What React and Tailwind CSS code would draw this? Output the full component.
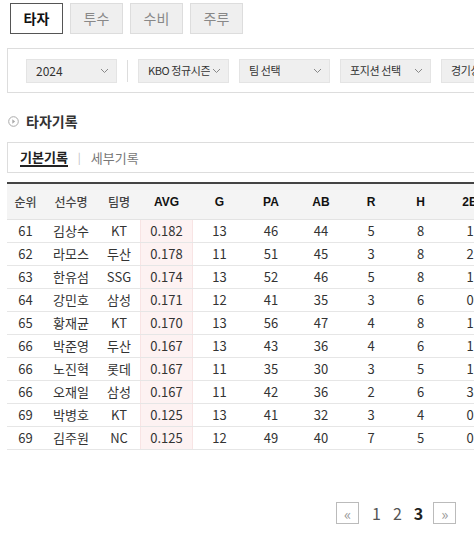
import React from 'react';

const TABS = ['타자', '투수', '수비', '주루'];

const FILTERS = ['2024', 'KBO 정규시즌', '팀 선택', '포지션 선택', '경기상황'];

const COLUMNS = [
  { key: 'rank', label: '순위', w: 'w-[37px]' },
  { key: 'name', label: '선수명', w: 'w-[54px]' },
  { key: 'team', label: '팀명', w: 'w-[42px]' },
  { key: 'avg', label: 'AVG', w: 'w-[53px]' },
  { key: 'g', label: 'G', w: 'w-[53px]' },
  { key: 'pa', label: 'PA', w: 'w-[50px]' },
  { key: 'ab', label: 'AB', w: 'w-[50px]' },
  { key: 'r', label: 'R', w: 'w-[50px]' },
  { key: 'h', label: 'H', w: 'w-[49px]' },
  { key: 'b2', label: '2B', w: 'w-[50px]' },
];

const ROWS = [
  ['61', '김상수', 'KT', '0.182', '13', '46', '44', '5', '8', '1'],
  ['62', '라모스', '두산', '0.178', '11', '51', '45', '3', '8', '2'],
  ['63', '한유섬', 'SSG', '0.174', '13', '52', '46', '5', '8', '1'],
  ['64', '강민호', '삼성', '0.171', '12', '41', '35', '3', '6', '0'],
  ['65', '황재균', 'KT', '0.170', '13', '56', '47', '4', '8', '1'],
  ['66', '박준영', '두산', '0.167', '13', '43', '36', '4', '6', '1'],
  ['66', '노진혁', '롯데', '0.167', '11', '35', '30', '3', '5', '1'],
  ['66', '오재일', '삼성', '0.167', '11', '42', '36', '2', '6', '3'],
  ['69', '박병호', 'KT', '0.125', '13', '41', '32', '3', '4', '0'],
  ['69', '김주원', 'NC', '0.125', '12', '49', '40', '7', '5', '0'],
];

function Chevron() {
  return (
    <svg width="9" height="6" viewBox="0 0 9 6" className="shrink-0">
      <path d="M1 1l3.5 3.5L8 1" fill="none" stroke="#888" strokeWidth="1" />
    </svg>
  );
}

export default function App() {
  return (
    <div className="w-[474px] h-[547px] overflow-hidden bg-white text-[#333] font-['Noto_Sans_CJK_KR',sans-serif]">
      {/* Type tabs */}
      <div className="flex gap-[7px] pl-[10px] pt-[3px]">
        {TABS.map((t, i) => (
          <div
            key={t}
            className={
              i === 0
                ? 'w-[53px] h-[31px] flex items-center justify-center border border-[#555] bg-white text-[14px] font-bold text-[#111]'
                : 'w-[53px] h-[31px] flex items-center justify-center border border-[#ddd] bg-[#efefef] text-[14px] text-[#888]'
            }
          >
            {t}
          </div>
        ))}
      </div>

      {/* Filters */}
      <div className="ml-[7px] mt-[14px] w-[500px] h-[45px] border border-[#ddd] flex items-center pl-[18px] gap-[10px]">
        {FILTERS.map((f, i) => (
          <React.Fragment key={f}>
            <div className="w-[91px] h-[24px] shrink-0 bg-[#efefef] border border-[#e4e4e4] flex items-center justify-between pl-[9px] pr-[7px] text-[11px] text-[#333]">
              <span className={`whitespace-nowrap overflow-hidden ${i === 0 ? 'text-[12px]' : 'tracking-[-0.4px]'}`}>{f}</span>
              {i < 4 && <Chevron />}
            </div>
            {i === 0 && <div className="w-px h-[22px] bg-[#ddd] shrink-0" />}
          </React.Fragment>
        ))}
      </div>

      {/* Section title */}
      <div className="flex items-center gap-[7px] pl-[8px] mt-[19px] h-[18px]">
        <svg width="11" height="11" viewBox="0 0 11 11">
          <circle cx="5.5" cy="5.5" r="4.8" fill="none" stroke="#aaa" strokeWidth="1" />
          <path d="M4.3 3.3l2.8 2.2-2.8 2.2z" fill="#aaa" />
        </svg>
        <span className="text-[14px] font-bold text-[#333]">타자기록</span>
      </div>

      {/* Sub tabs */}
      <div className="ml-[7px] mt-[12px] w-[500px] h-[31px] border border-[#ddd] flex items-center pl-[12px] text-[13px]">
        <span className="font-bold text-[#222] border-b-2 border-[#222] leading-[16px]">기본기록</span>
        <span className="mx-[10px] text-[#bbb] text-[11px]">|</span>
        <span className="text-[#777]">세부기록</span>
      </div>

      {/* Table */}
      <div className="ml-[7px] mt-[9px] border-t-2 border-[#444] w-[500px]">
        <div className="flex h-[36px] bg-[#f4f4f4] border-b border-[#e3e3e3] text-[12px]">
          {COLUMNS.map((c, i) => (
            <div
              key={c.key}
              className={`${c.w} shrink-0 flex items-center justify-center ${i < 3 ? 'text-[#444] font-medium' : 'text-[#111] font-["Liberation_Sans",sans-serif] font-bold'}`}
            >
              {c.label}
            </div>
          ))}
        </div>
        {ROWS.map((row, r) => (
          <div key={r} className="flex h-[23px] border-b border-[#e6e6e6] text-[13px] text-[#333]">
            {row.map((v, i) => (
              <div
                key={i}
                className={`${COLUMNS[i].w} shrink-0 flex items-center justify-center ${i === 3 ? 'bg-[#fdf2f2] border-x border-[#f8e4e4]' : ''}`}
              >
                {v}
              </div>
            ))}
          </div>
        ))}
      </div>

      {/* Pagination */}
      <div className="flex items-center pl-[336px] mt-[51px]">
        <div className="w-[23px] h-[22px] border border-[#bbb] flex items-center justify-center text-[15px] text-[#999] leading-none">«</div>
        <div className="flex items-center gap-[12px] ml-[13px] mr-[10px] text-[16px]">
          <span className="text-[#555]">1</span>
          <span className="text-[#555]">2</span>
          <span className="font-bold text-[#222]">3</span>
        </div>
        <div className="w-[23px] h-[22px] border border-[#bbb] flex items-center justify-center text-[15px] text-[#999] leading-none">»</div>
      </div>
    </div>
  );
}
